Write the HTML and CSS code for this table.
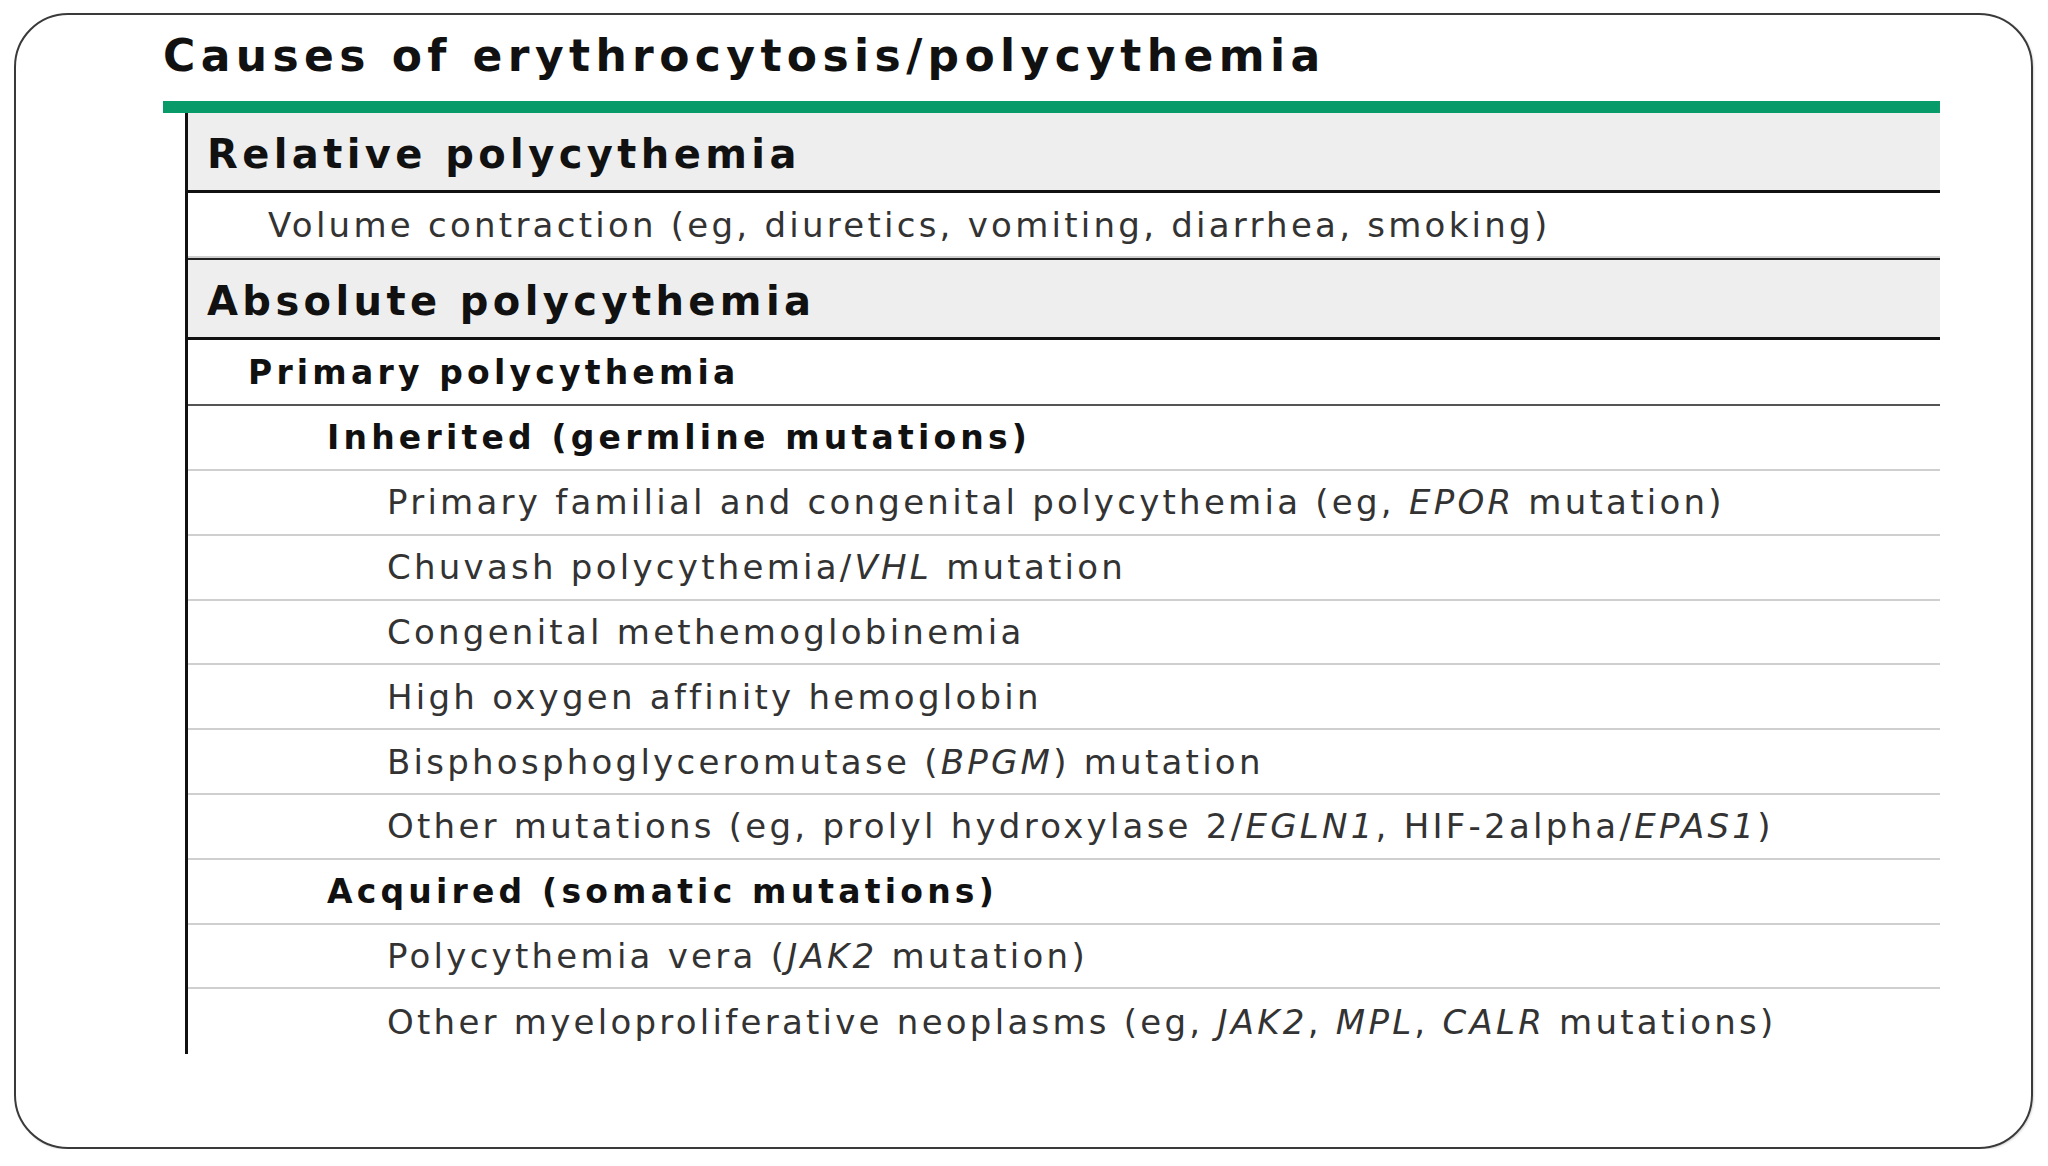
FILE: index.html
```html
<!DOCTYPE html>
<html lang="en">
<head>
<meta charset="utf-8">
<title>Causes of erythrocytosis/polycythemia</title>
<link rel="stylesheet" href="styles.css">
</head>
<body>
<div class="frame">
  <h1 class="title">Causes of erythrocytosis/polycythemia</h1>
  <div class="table">
    <div class="rows">
      <div class="row head"><span>Relative polycythemia</span></div>
      <div class="row item lvl-vol"><span>Volume contraction (eg, diuretics, vomiting, diarrhea, smoking)</span></div>
      <div class="row head head-top"><span>Absolute polycythemia</span></div>
      <div class="row sub lvl1"><span>Primary polycythemia</span></div>
      <div class="row sub lvl2"><span>Inherited (germline mutations)</span></div>
      <div class="row item lvl3"><span>Primary familial and congenital polycythemia (eg, <i>EPOR</i> mutation)</span></div>
      <div class="row item lvl3"><span>Chuvash polycythemia/<i>VHL</i> mutation</span></div>
      <div class="row item lvl3"><span>Congenital methemoglobinemia</span></div>
      <div class="row item lvl3"><span>High oxygen affinity hemoglobin</span></div>
      <div class="row item lvl3"><span>Bisphosphoglyceromutase (<i>BPGM</i>) mutation</span></div>
      <div class="row item lvl3"><span>Other mutations (eg, prolyl hydroxylase 2/<i>EGLN1</i>, HIF-2alpha/<i>EPAS1</i>)</span></div>
      <div class="row sub lvl2"><span>Acquired (somatic mutations)</span></div>
      <div class="row item lvl3"><span>Polycythemia vera (<i>JAK2</i> mutation)</span></div>
      <div class="row item lvl3 last"><span>Other myeloproliferative neoplasms (eg, <i>JAK2</i>, <i>MPL</i>, <i>CALR</i> mutations)</span></div>
    </div>
  </div>
</div>
</body>
</html>
```

FILE: styles.css
```css
html, body {
  margin: 0;
  padding: 0;
  background: #ffffff;
}

body {
  font-family: "DejaVu Sans", Verdana, sans-serif;
  color: #222;
}

.frame {
  box-sizing: border-box;
  margin: 13px 15px 0 14px;
  height: 1136px;
  border: 2px solid #3a3a3a;
  border-radius: 54px;
  padding: 0 0 0 147px;
  box-shadow: 1px 1px 2px rgba(0, 0, 0, 0.15);
}

.title {
  margin: 0;
  height: 86px;
  box-sizing: border-box;
  padding-top: 15px;
  font-size: 44px;
  line-height: 52px;
  font-weight: bold;
  color: #111;
  letter-spacing: 5.4px;
  white-space: nowrap;
}

.table {
  width: 1777px;
  border-top: 12px solid #089a68;
}

.rows {
  margin-left: 22px;
  border-left: 3px solid #111;
}

.row {
  display: flex;
  align-items: center;
  box-sizing: border-box;
  white-space: nowrap;
  border-bottom: 2px solid #cfcfcf;
}

.head {
  height: 80px;
  background: #eeeeee;
  padding-left: 19px;
  padding-top: 4px;
  font-size: 40px;
  font-weight: bold;
  color: #111;
  letter-spacing: 4.4px;
  border-bottom: 3px solid #111;
}

.head-top {
  height: 82px;
  border-top: 2px solid #222;
}

.item {
  height: 64.8px;
  font-size: 34px;
  color: #333;
  letter-spacing: 3.25px;
}

.item i {
  font-style: italic;
}

.sub {
  height: 64.8px;
  font-size: 33px;
  font-weight: bold;
  color: #111;
  letter-spacing: 4.2px;
}

.lvl-vol {
  height: 65.2px;
  padding-left: 80px;
}

.lvl1 {
  height: 66px;
  padding-left: 60px;
  border-bottom: 2px solid #555;
}

.lvl2 {
  padding-left: 139px;
}

.lvl3 {
  padding-left: 199px;
}

.last {
  border-bottom: none;
}
```
